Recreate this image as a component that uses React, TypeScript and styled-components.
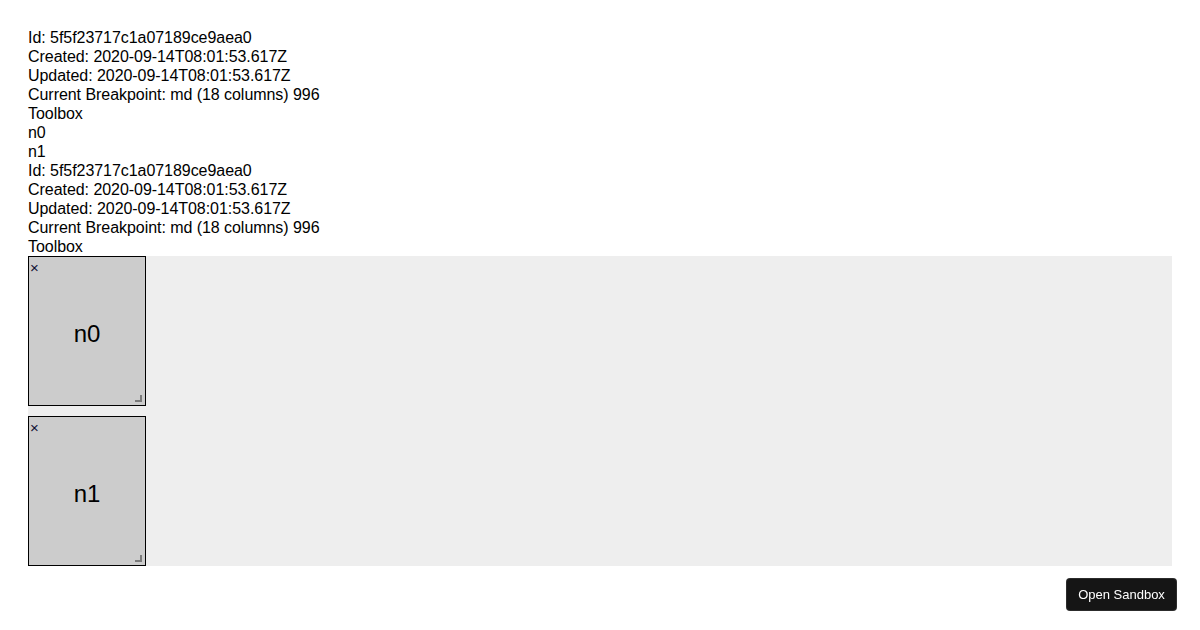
import { createGlobalStyle } from 'styled-components'
import styled from 'styled-components'

const GlobalStyle = createGlobalStyle`
  body {
    margin: 8px;
    font-family: 'Liberation Sans', Arial, sans-serif;
    font-size: 16px;
    line-height: 19px;
    color: #000;
    background: #fff;
  }
`

const items = ['n0', 'n1']

const meta = {
  id: '5f5f23717c1a07189ce9aea0',
  created: '2020-09-14T08:01:53.617Z',
  updated: '2020-09-14T08:01:53.617Z',
}

const Info = () => (
  <>
    <Line>Id: {meta.id}</Line>
    <Line>Created: {meta.created}</Line>
    <Line>Updated: {meta.updated}</Line>
    <Line>Current Breakpoint: md (18 columns) 996</Line>
    <Line>Toolbox</Line>
  </>
)

export default function App() {
  return (
    <Page>
      <GlobalStyle />
      <Info />
      {items.map((i) => (
        <Line key={i}>{i}</Line>
      ))}
      <Info />
      <Grid>
        {items.map((i) => (
          <Item key={i}>
            <Remove>×</Remove>
            <Label>{i}</Label>
            <Handle />
          </Item>
        ))}
      </Grid>
      <SandboxButton>Open Sandbox</SandboxButton>
    </Page>
  )
}

const Page = styled.div`
  padding: 20px;
`
const Line = styled.div`
  height: 19px;
  letter-spacing: -0.05px;
`
const Grid = styled.div`
  background: #eee;
  display: flex;
  flex-direction: column;
  gap: 10px;
`
const Item = styled.div`
  position: relative;
  box-sizing: border-box;
  width: 118px;
  height: 150px;
  background: #ccc;
  border: 1px solid black;
  display: flex;
  align-items: center;
  justify-content: center;
`
const Label = styled.span`
  font-size: 24px;
  line-height: 28px;
  margin-top: 5px;
`
const Remove = styled.span`
  position: absolute;
  left: 1px;
  top: 4px;
  font-size: 15px;
  line-height: 14px;
  cursor: pointer;
  color: #111133;
`
const Handle = styled.span`
  position: absolute;
  right: 3px;
  bottom: 3px;
  width: 5px;
  height: 5px;
  border-right: 2px solid rgba(0, 0, 0, 0.4);
  border-bottom: 2px solid rgba(0, 0, 0, 0.4);
`
const SandboxButton = styled.button`
  position: fixed;
  right: 23px;
  bottom: 19px;
  width: 111px;
  height: 33px;
  border: 1px solid rgba(255, 255, 255, 0.1);
  border-radius: 4px;
  background: #151515;
  color: #fff;
  font-family: 'Liberation Sans', Arial, sans-serif;
  font-size: 13px;
  padding: 0;
  cursor: pointer;
`
